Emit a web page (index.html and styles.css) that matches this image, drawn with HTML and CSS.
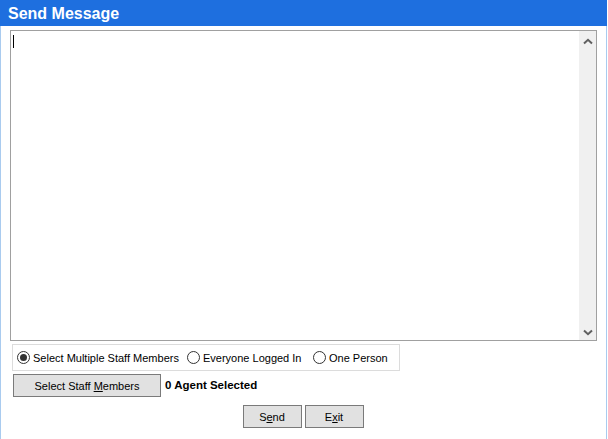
FILE: index.html
```html
<!DOCTYPE html>
<html>
<head>
<meta charset="utf-8">
<link rel="stylesheet" href="styles.css">
</head>
<body>
<div class="window">
  <div class="titlebar">Send Message</div>
  <div class="content">
    <div class="editor">
      <div class="text-area"><span class="caret"></span></div>
      <div class="scrollbar">
        <svg class="chev" width="10" height="7" viewBox="0 0 10 7"><path d="M1 5.5 L5 1.8 L9 5.5" fill="none" stroke="#606060" stroke-width="2"/></svg>
        <svg class="chev" width="10" height="7" viewBox="0 0 10 7"><path d="M1 1.5 L5 5.2 L9 1.5" fill="none" stroke="#606060" stroke-width="2"/></svg>
      </div>
    </div>
    <div class="radio-group">
      <label class="radio r1"><span class="dot checked"></span>Select Multiple Staff Members</label>
      <label class="radio r2"><span class="dot"></span>Everyone Logged In</label>
      <label class="radio r3"><span class="dot"></span>One Person</label>
    </div>
    <div class="select-row">
      <button class="btn btn-wide">Select Staff <u>M</u>embers</button>
      <span class="count">0 Agent Selected</span>
    </div>
    <div class="actions">
      <button class="btn btn-small">S<u>e</u>nd</button>
      <button class="btn btn-small">E<u>x</u>it</button>
    </div>
  </div>
</div>
</body>
</html>
```
FILE: styles.css
```css
html, body {
  margin: 0;
  padding: 0;
  background: #ffffff;
}
body {
  width: 608px;
  height: 439px;
  overflow: hidden;
  font-family: "Liberation Sans", Arial, sans-serif;
}
.window {
  width: 607px;
  height: 439px;
  box-sizing: border-box;
  border-left: 1px solid #a9cbef;
  border-right: 1px solid #a9cbef;
}
.titlebar {
  height: 26px;
  margin: 0 -1px;
  background: #1e6fdf;
  color: #ffffff;
  font-weight: bold;
  font-size: 16px;
  line-height: 28px;
  padding-left: 8px;
}
.content {
  display: flex;
  flex-direction: column;
  padding-top: 4px;
}
.editor {
  margin-left: 9px;
  width: 587px;
  height: 311px;
  box-sizing: border-box;
  border: 1px solid #a0a0a0;
  display: flex;
  background: #fff;
}
.text-area {
  flex: 1;
  padding: 4px 0 0 2px;
}
.caret {
  display: block;
  width: 1px;
  height: 13px;
  background: #000;
}
.scrollbar {
  width: 17px;
  background: #f0f0f0;
  display: flex;
  flex-direction: column;
  justify-content: space-between;
  align-items: center;
  padding: 7px 0 4px;
}
.chev {
  display: block;
}
.radio-group {
  margin: 3px 0 0 11px;
  width: 388px;
  height: 27px;
  box-sizing: border-box;
  border: 1px solid #dcdcdc;
  display: flex;
  align-items: center;
  padding-left: 4px;
  font-size: 11px;
  color: #000;
  white-space: nowrap;
}
.radio {
  display: flex;
  align-items: center;
  flex: none;
}
.r1 { width: 170px; }
.r2 { width: 126px; }
.dot {
  width: 13px;
  height: 13px;
  box-sizing: border-box;
  border: 1px solid #333;
  border-radius: 50%;
  margin-right: 3px;
  display: flex;
  align-items: center;
  justify-content: center;
  background: #fff;
}
.dot.checked::after {
  content: "";
  width: 7px;
  height: 7px;
  border-radius: 50%;
  background: #333;
}
.select-row {
  display: flex;
  align-items: center;
  margin: 3px 0 0 12px;
  height: 23px;
  white-space: nowrap;
}
.btn {
  font-family: "Liberation Sans", Arial, sans-serif;
  font-size: 11px;
  color: #000;
  background: #e1e1e1;
  border: 1px solid #7a7a7a;
  padding: 0;
  height: 23px;
  box-sizing: border-box;
  white-space: nowrap;
}
.btn-wide {
  width: 148px;
}
.count {
  font-weight: bold;
  font-size: 11.5px;
  margin-left: 4px;
  margin-top: -2px;
}
.actions {
  display: flex;
  justify-content: center;
  gap: 3px;
  margin-top: 8px;
  padding-right: 1px;
}
.btn-small {
  width: 59px;
}
```
